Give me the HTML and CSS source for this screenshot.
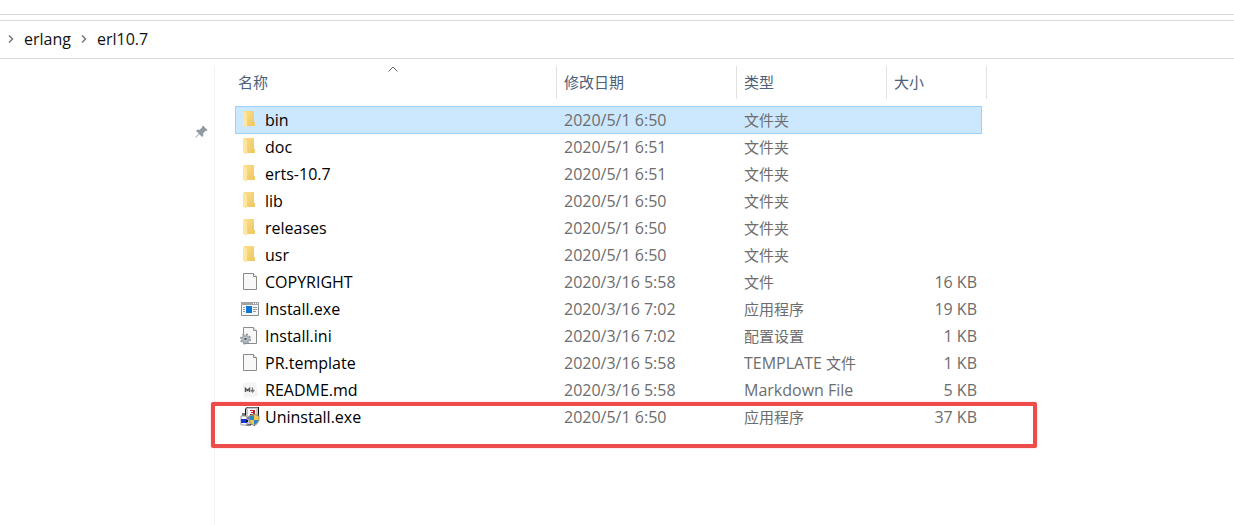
FILE: index.html
```
<!DOCTYPE html>
<html lang="zh-CN">
<head>
<meta charset="utf-8">
<title>erl10.7</title>
<link rel="stylesheet" href="styles.css">
</head>
<body>
<svg class="defs" aria-hidden="true">
  <defs>
    <linearGradient id="fold" x1="0" y1="0" x2="1" y2="1"><stop offset="0" stop-color="#fbdf8c"/><stop offset="1" stop-color="#eec55f"/></linearGradient>
    <symbol id="folder" viewBox="0 0 20 20">
      <path d="M4 1h10v11h1v4H4z" fill="url(#fold)"/>
      <path d="M14 12h1v4h-1z" fill="#f3cf72"/>
      <path d="M3 1.500l4 2V15l-1 3-3-2.500z" fill="#ffe6a0"/>
    </symbol>
    <symbol id="page" viewBox="0 0 20 20">
      <path d="M3.500 1.500h10l3 3v13h-13z" fill="#f8f8f8" stroke="#8b8b8b"/>
      <path d="M13.500 1.500v3h3" fill="#fff" stroke="#8b8b8b"/>
    </symbol>
    <symbol id="app" viewBox="0 0 20 20">
      <path d="M1.500 3.500h17v13h-17z" fill="#f7f7f7" stroke="#8c8f92"/>
      <path d="M1 3h18v3H1z" fill="#a0a4a7"/>
      <path d="M13 4h1v1h-1zM15 4h1v1h-1zM17 4h1v1h-1z" fill="#fff"/>
      <path d="M6 7h6v7H6z" fill="#0b78d7"/>
      <path d="M3 8.500h2M3 10.500h2M3 12.500h2M13 8.500h4M13 10.500h4M13 12.500h3" stroke="#9b9b9b"/>
    </symbol>
    <symbol id="config" viewBox="0 0 20 20">
      <path d="M3.500 1.500h10l3 3v13h-13z" fill="#f8f8f8" stroke="#8b8b8b"/>
      <path d="M13.500 1.500v3h3" fill="#fff" stroke="#8b8b8b"/>
      <circle cx="5.500" cy="13" r="4.500" fill="none" stroke="#8c969c" stroke-width="2" stroke-dasharray="2 1.500"/>
      <circle cx="5.500" cy="13" r="3" fill="#dce2e5" stroke="#a7b0b5" stroke-width="2"/>
      <circle cx="5.500" cy="13" r="1.300" fill="#4e5961"/>
    </symbol>
    <symbol id="markdown" viewBox="0 0 20 20">
      <path d="M3 3l13-1 2 14-14 2z" fill="#f3f3f3"/>
      <path d="M5.500 12V8.500l2 2 2-2V12" fill="none" stroke="#555" stroke-width="1.400"/>
      <path d="M12.500 7.500V12M10.800 10l1.700 2 1.800-2" fill="none" stroke="#777" stroke-width="1.200"/>
    </symbol>
    <symbol id="uninstall" viewBox="0 0 20 20">
      <path d="M7 0h11l1 1v9H6V2z" fill="#c5c5c5"/>
      <path d="M18.500 0v11H9M5.500 10V2l2-2H18" fill="none" stroke="#111"/>
      <path d="M8 2h8v7H8z" fill="#fff"/>
      <path d="M10 3h5v5h-5V7h3V6h-2V5h2V4h-3z" fill="#b51e2e"/>
      <path d="M5 11h8v3l-2 4H6z" fill="#c9c9c9" stroke="#111"/>
      <path d="M2 6h3v3H2z" fill="#777"/>
      <path d="M1 9h5l1 2v7H1z" fill="#fff" stroke="#999"/>
      <path d="M1 12h6v4H1z" fill="#1633dc"/>
      <path d="M6 13h2v2H6z" fill="#111"/>
      <path d="M14 7l5 2v4q-1 4-5 6-4-2-5-6V9z" fill="#f2c84b" stroke="#64748a" stroke-width=".7"/>
      <path d="M14 8v5H9.500V9.300zM14 13h4.500q-1 3.500-4.500 5z" fill="#2c83c5"/>
    </symbol>
  </defs>
</svg>
<div class="window">
  <div class="toolbar"></div>
  <nav class="breadcrumb" aria-label="路径">
    <svg class="chevron" viewBox="0 0 6 8"><path d="M1 0.500l3.500 3.500L1 7.500"/></svg>
    <a class="crumb" href="#">erlang</a>
    <svg class="chevron" viewBox="0 0 6 8"><path d="M1 0.500l3.500 3.500L1 7.500"/></svg>
    <a class="crumb" href="#">erl10.7</a>
  </nav>
  <div class="content">
    <aside class="sidebar">
      <svg class="pin" viewBox="0 0 14 14"><path d="M8.500 0.500l5 5-1 1-1-.3-2.700 2.700.2 2.700-1.300 1.300-3-3L1 13.500l-.7.200.2-.7 3.600-3.700-3-3L2.400 5l2.700.2 2.700-2.700-.3-1z"/></svg>
    </aside>
    <main class="files">
      <div class="listing">
        <table class="table">
          <colgroup><col class="col-name"><col class="col-date"><col class="col-type"><col class="col-size"><col class="col-end"></colgroup>
          <thead>
            <tr>
              <th aria-sort="ascending"><button class="head">名称<svg class="sort" viewBox="0 0 10 6"><path d="M0.500 5.500L5 1l4.500 4.500"/></svg></button></th>
              <th><button class="head">修改日期</button></th>
              <th><button class="head">类型</button></th>
              <th colspan="2"><button class="head">大小</button></th>
            </tr>
          </thead>
          <tbody>
            <tr class="selected"><td><div class="name"><svg class="icon"><use href="#folder"/></svg>bin</div></td><td>2020/5/1 6:50</td><td class="cjk">文件夹</td><td class="size"></td></tr>
            <tr><td><div class="name"><svg class="icon"><use href="#folder"/></svg>doc</div></td><td>2020/5/1 6:51</td><td class="cjk">文件夹</td><td class="size"></td></tr>
            <tr><td><div class="name"><svg class="icon"><use href="#folder"/></svg>erts-10.7</div></td><td>2020/5/1 6:51</td><td class="cjk">文件夹</td><td class="size"></td></tr>
            <tr><td><div class="name"><svg class="icon"><use href="#folder"/></svg>lib</div></td><td>2020/5/1 6:50</td><td class="cjk">文件夹</td><td class="size"></td></tr>
            <tr><td><div class="name"><svg class="icon"><use href="#folder"/></svg>releases</div></td><td>2020/5/1 6:50</td><td class="cjk">文件夹</td><td class="size"></td></tr>
            <tr><td><div class="name"><svg class="icon"><use href="#folder"/></svg>usr</div></td><td>2020/5/1 6:50</td><td class="cjk">文件夹</td><td class="size"></td></tr>
            <tr><td><div class="name"><svg class="icon"><use href="#page"/></svg>COPYRIGHT</div></td><td>2020/3/16 5:58</td><td class="cjk">文件</td><td class="size">16 KB</td></tr>
            <tr><td><div class="name"><svg class="icon"><use href="#app"/></svg>Install.exe</div></td><td>2020/3/16 7:02</td><td class="cjk">应用程序</td><td class="size">19 KB</td></tr>
            <tr><td><div class="name"><svg class="icon"><use href="#config"/></svg>Install.ini</div></td><td>2020/3/16 7:02</td><td class="cjk">配置设置</td><td class="size">1 KB</td></tr>
            <tr><td><div class="name"><svg class="icon"><use href="#page"/></svg>PR.template</div></td><td>2020/3/16 5:58</td><td>TEMPLATE <span class="cjk">文件</span></td><td class="size">1 KB</td></tr>
            <tr><td><div class="name"><svg class="icon"><use href="#markdown"/></svg>README.md</div></td><td>2020/3/16 5:58</td><td>Markdown File</td><td class="size">5 KB</td></tr>
            <tr><td><div class="name"><svg class="icon"><use href="#uninstall"/></svg>Uninstall.exe</div></td><td>2020/5/1 6:50</td><td class="cjk">应用程序</td><td class="size">37 KB</td></tr>
          </tbody>
        </table>
        <div class="highlight"></div>
      </div>
    </main>
  </div>
</div>
</body>
</html>
```
FILE: styles.css
```
* { box-sizing: border-box; }
body {
  margin: 0;
  background: #fff;
  color: #000;
  font: 16px/20px "Open Sans", "Noto Sans CJK SC", sans-serif;
}
.defs { position: absolute; width: 0; height: 0; }
.window { display: flex; flex-direction: column; min-height: 100vh; }
.toolbar { height: 15px; border-bottom: 1px solid #d9d9d9; }
.breadcrumb {
  display: flex;
  align-items: center;
  gap: 10px;
  height: 39px;
  margin-top: 5px;
  padding: 0 0 2px 8px;
  border: solid #d9d9d9;
  border-width: 1px 0;
}
.chevron { width: 6px; height: 8px; fill: none; stroke: #777; stroke-width: 1.5; }
.crumb { color: #111; text-decoration: none; }
.content { display: flex; flex: 1; padding-top: 7px; }
.sidebar {
  display: flex;
  flex: none;
  justify-content: flex-end;
  width: 215px;
  padding: 59px 6px 0 0;
  border-right: 1px solid #f3f3f3;
}
.pin { width: 13px; height: 13px; fill: #8f9aa3; }
.files { flex: 1; padding-left: 20px; }
.listing { position: relative; width: 752px; }
.table { width: 100%; table-layout: fixed; border-collapse: separate; border-spacing: 0; }
.col-name { width: 322px; }
.col-date { width: 180px; }
.col-type { width: 150px; }
.col-size { width: 95px; }
.col-end { width: 5px; }
th { padding: 0 0 7px; font-weight: normal; }
.head {
  position: relative;
  display: block;
  width: 100%;
  height: 33px;
  padding: 0 7px 2px;
  border: 0;
  border-right: 1px solid #e2e2e2;
  background: none;
  color: #4c607a;
  font: 15px/20px "Noto Sans CJK SC", sans-serif;
  text-align: left;
}
th:first-child .head { padding-left: 3px; }
.sort {
  position: absolute;
  top: 0;
  left: 153px;
  width: 10px;
  height: 6px;
  fill: none;
  stroke: #666;
}
td { height: 27px; padding: 0 7px 1px; color: #6d6d6d; white-space: nowrap; }
td:first-child { padding-left: 5px; }
.cjk { font-size: 15px; }
.name { display: flex; align-items: center; gap: 5px; color: #000; }
.icon { width: 20px; height: 20px; }
.size { padding-right: 5px; text-align: right; }
.selected td {
  height: 28px;
  border: solid #99d1ff;
  border-width: 1px 0;
  background: #cce8ff;
}
.selected td:first-child { padding-left: 4px; border-left-width: 1px; }
.selected .size { border-right-width: 1px; }
.highlight {
  position: absolute;
  top: 336px;
  left: -24px;
  width: 826px;
  height: 46px;
  border: 4px solid #ee4b4b;
  border-radius: 2px;
  box-shadow: 0 0 1px #ee4b4b;
}
```
